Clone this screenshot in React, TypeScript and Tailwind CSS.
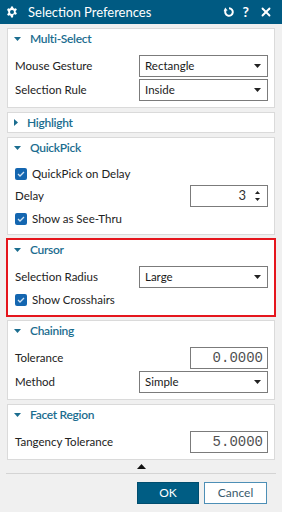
import React from 'react';
import { X } from 'lucide-react';

const font = { fontFamily: 'Lato, "Noto Sans", sans-serif' };

const Caret = ({ open = true }: { open?: boolean }) =>
  open ? (
    <svg width="7" height="4" viewBox="0 0 7 4" className="shrink-0">
      <path d="M0 0h7L3.5 4z" fill="#1b6d8f" />
    </svg>
  ) : (
    <svg width="4" height="7" viewBox="0 0 4 7" className="shrink-0">
      <path d="M0 0v7l4-3.5z" fill="#1b6d8f" />
    </svg>
  );

const Panel = ({
  title,
  open = true,
  highlight = false,
  children,
}: {
  title: string;
  open?: boolean;
  highlight?: boolean;
  children?: React.ReactNode;
}) => (
  <div
    className={`bg-white border border-[#dadada] ${
      highlight ? 'outline-2 outline-[#e5161d] [outline-offset:-1px]' : ''
    }`}
  >
    <div className="h-[19px] flex items-center gap-[9px] pl-[6px]">
      <Caret open={open} />
      <span className="text-[12px] font-semibold tracking-[-0.3px] text-[#1b6d8f] leading-none">{title}</span>
    </div>
    {children && <div className="flex flex-col gap-[2px] pl-[7px] pr-[6px] pt-[7px] pb-[6px]">{children}</div>}
  </div>
);

const Dropdown = ({ label, value }: { label: string; value: string }) => (
  <div className="h-[22px] flex items-center justify-between">
    <span className="text-[11.5px] text-[#222]">{label}</span>
    <div className="w-[129px] h-[22px] border border-[#7b7b7b] flex items-center justify-between pl-[5px] pr-[6px]">
      <span className="text-[11.5px] text-[#1a1a1a]">{value}</span>
      <svg width="7" height="4" viewBox="0 0 7 4">
        <path d="M0 0h7L3.5 4z" fill="#222" />
      </svg>
    </div>
  </div>
);

const NumberBox = ({ label, value }: { label: string; value: string }) => (
  <div className="h-[22px] flex items-center justify-between">
    <span className="text-[11.5px] text-[#222]">{label}</span>
    <div className="w-[78px] h-[22px] border border-[#7b7b7b] flex items-center justify-end pr-[4px]">
      <span className="text-[14px] text-[#505050] leading-none" style={{ fontFamily: '"Liberation Mono", monospace' }}>
        {value}
      </span>
    </div>
  </div>
);

const SpinBox = ({ label, value }: { label: string; value: string }) => (
  <div className="h-[22px] flex items-center justify-between">
    <span className="text-[11.5px] text-[#222]">{label}</span>
    <div className="w-[78px] h-[22px] border border-[#7b7b7b] flex items-center justify-end pr-[7px] gap-[9px]">
      <span className="text-[13px] text-[#333]">{value}</span>
      <svg width="5" height="12" viewBox="0 0 5 12">
        <path d="M0 4h5L2.5 1z" fill="#222" />
        <path d="M0 8h5L2.5 11z" fill="#222" />
      </svg>
    </div>
  </div>
);

const Check = ({ label }: { label: string }) => (
  <div className="h-[19px] flex items-center gap-[5px]">
    <div className="w-[12px] h-[12px] rounded-[2px] bg-[#1466b0] flex items-center justify-center">
      <svg width="8" height="6" viewBox="0 0 8 6">
        <path d="M1 3l2 2 4-4" fill="none" stroke="#cfe2f3" strokeWidth="1.3" />
      </svg>
    </div>
    <span className="text-[11.5px] text-[#222]">{label}</span>
  </div>
);

const Gear = () => (
  <svg width="12" height="12" viewBox="0 0 24 24">
    <path
      fill="white"
      fillRule="evenodd"
      d="M10 1h4l.6 3.2a8 8 0 0 1 2.1 1.2l3.1-1.1 2 3.4-2.5 2.1a8 8 0 0 1 0 2.4l2.5 2.1-2 3.4-3.1-1.1a8 8 0 0 1-2.1 1.2L14 23h-4l-.6-3.2a8 8 0 0 1-2.1-1.2l-3.1 1.1-2-3.4 2.5-2.1a8 8 0 0 1 0-2.4L2.2 7.7l2-3.4 3.1 1.1a8 8 0 0 1 2.1-1.2zM12 8a4 4 0 1 0 0 8 4 4 0 0 0 0-8z"
    />
  </svg>
);

// circular arrow, gap at the upper left
const Refresh = () => (
  <svg width="12" height="12" viewBox="0 0 12 12">
    <path d="M6 2.2A3.8 3.8 0 1 1 2.6 4.3" fill="none" stroke="white" strokeWidth="2" />
    <path d="M0.6 5.2L2.2 1.6 4.6 4.6z" fill="white" />
  </svg>
);

export default function App() {
  return (
    <div className="w-[282px] h-[512px] bg-[#f0f0f0] flex flex-col overflow-hidden" style={font}>
      <div className="h-[24px] bg-[#005a82] flex items-center pl-[6px] pr-[9px] shrink-0">
        <Gear />
        <span className="ml-[10px] text-[13px] text-white leading-none">Selection Preferences</span>
        <div className="ml-auto flex items-center">
          <Refresh />
          <span className="ml-[8px] text-[14px] font-bold text-white leading-none">?</span>
          <X size={14} strokeWidth={3.2} color="white" className="ml-[10px]" />
        </div>
      </div>

      <div className="flex flex-col gap-[4px] px-[7px] pt-[4px]">
        <Panel title="Multi-Select">
          <Dropdown label="Mouse Gesture" value="Rectangle" />
          <Dropdown label="Selection Rule" value="Inside" />
        </Panel>
        <Panel title="Highlight" open={false} />
        <Panel title="QuickPick">
          <Check label="QuickPick on Delay" />
          <SpinBox label="Delay" value="3" />
          <Check label="Show as See-Thru" />
        </Panel>
        <Panel title="Cursor" highlight>
          <Dropdown label="Selection Radius" value="Large" />
          <Check label="Show Crosshairs" />
        </Panel>
        <Panel title="Chaining">
          <NumberBox label="Tolerance" value="0.0000" />
          <Dropdown label="Method" value="Simple" />
        </Panel>
        <Panel title="Facet Region">
          <NumberBox label="Tangency Tolerance" value="5.0000" />
        </Panel>
      </div>

      <div className="h-[13px] flex items-center justify-center mx-[6px]">
        <svg width="9" height="5" viewBox="0 0 9 5">
          <path d="M0 5h9L4.5 0z" fill="#111" />
        </svg>
      </div>
      <div className="mx-[6px] border-t border-[#d4d4d4]" />
      <div className="flex justify-end gap-[5px] pt-[8px] pr-[15px]">
        <button className="w-[62px] h-[22px] bg-[#005d84] border border-[#004d6e] text-white text-[12px]">OK</button>
        <button className="w-[63px] h-[22px] bg-white border border-[#4d8fb6] text-[#3a5a6c] text-[12px]">Cancel</button>
      </div>
    </div>
  );
}
